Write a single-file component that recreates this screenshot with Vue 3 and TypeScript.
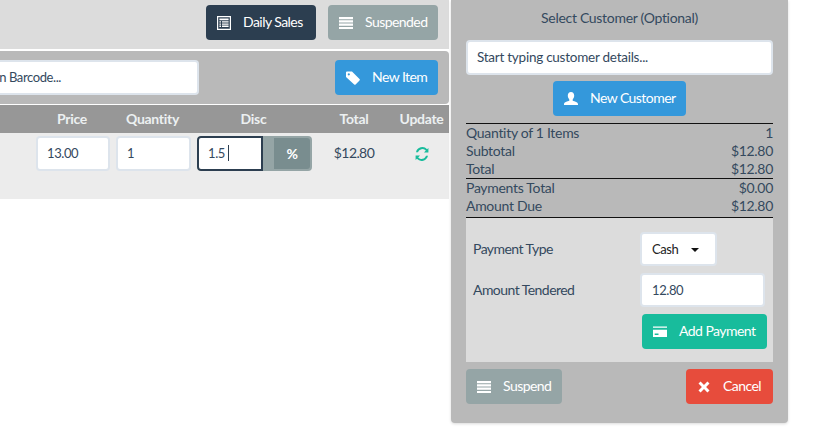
<script setup lang="ts">
const totalsTop = [
  { label: 'Quantity of 1 Items', value: '1' },
  { label: 'Subtotal', value: '$12.80' },
  { label: 'Total', value: '$12.80' },
]
const totalsBottom = [
  { label: 'Payments Total', value: '$0.00' },
  { label: 'Amount Due', value: '$12.80' },
]
</script>

<template>
  <div class="page">
    <div class="main">
      <div class="topbar">
        <button class="btn btn--dark top-btn">
          <svg class="ico" viewBox="0 0 14 14"><path fill="currentColor" fill-rule="evenodd" d="M0 0h14v14H0zM1.200 1.200v11.600h11.600V1.200zM2.400 2.400h9.200v1.800H2.400zM2.400 5.200h1.600v1.300H2.400zM5 5.200h6.600v1.300H5zM2.400 7.400h1.600v1.300H2.400zM5 7.400h6.600v1.300H5zM2.400 9.600h1.600v1.300H2.400zM5 9.600h6.600v1.300H5z" /></svg>
          <span>Daily Sales</span>
        </button>
        <button class="btn btn--gray top-btn">
          <svg class="ico" viewBox="0 0 14 14"><path fill="currentColor" d="M0 1h14v2.200H0zM0 4.300h14v2.200H0zM0 7.600h14v2.200H0zM0 10.900h14v2.200H0z" /></svg>
          <span>Suspended</span>
        </button>
      </div>
      <div class="searchbar">
        <div class="field search"><span class="search-text">Enter Item Name or Scan Barcode...</span></div>
        <button class="btn btn--blue new-item">
          <svg class="ico" viewBox="0 0 14 14"><path fill="currentColor" fill-rule="evenodd" d="M0 1.500A1 1 0 0 1 1 .5h5l7.500 7.600a1 1 0 0 1 0 1.400l-3.900 3.900a1 1 0 0 1-1.400 0L0 6zM2.800 2.200a1.100 1.100 0 1 0 .01 0z" /></svg>
          <span>New Item</span>
        </button>
      </div>
      <div class="grid grid--head">
        <span></span>
        <span>Price</span>
        <span>Quantity</span>
        <span>Disc</span>
        <span>Total</span>
        <span>Update</span>
      </div>
      <div class="grid grid--row">
        <span></span>
        <div class="field cell cell--price">13.00</div>
        <div class="field cell">1</div>
        <div class="disc">
          <div class="disc-input">1.5<i class="caret"></i></div>
          <div class="disc-addon"><b>%</b></div>
        </div>
        <span class="amount">$12.80</span>
        <svg class="refresh" viewBox="0 0 14 14"><path fill="currentColor" d="M13.400 1v4.400H9L10.800 3.600A4.600 4.600 0 0 0 3 5.200H1A6.500 6.500 0 0 1 12.100 2.200zM.6 13V8.600H5L3.200 10.400A4.600 4.600 0 0 0 11 8.800h2A6.500 6.500 0 0 1 1.900 11.800z" /></svg>
      </div>
    </div>

    <div class="side">
      <div class="side-title">Select Customer (Optional)</div>
      <div class="field customer">Start typing customer details...</div>
      <div class="center">
        <button class="btn btn--blue new-customer">
          <svg class="ico" viewBox="0 0 14 14"><path fill="currentColor" d="M7 0c2 0 3.200 1.500 3.200 3.600 0 1.600-.7 3-1.500 3.800v1.300c1.800.7 5.300 1.200 5.300 3.400V13H0v-.9c0-2.200 3.500-2.700 5.300-3.400V7.400C4.500 6.600 3.800 5.200 3.800 3.600 3.800 1.500 5 0 7 0z" /></svg>
          <span>New Customer</span>
        </button>
      </div>
      <div class="totals">
        <div v-for="row in totalsTop" :key="row.label" class="total-row">
          <span>{{ row.label }}</span><span>{{ row.value }}</span>
        </div>
      </div>
      <div class="totals totals--second">
        <div v-for="row in totalsBottom" :key="row.label" class="total-row">
          <span>{{ row.label }}</span><span>{{ row.value }}</span>
        </div>
      </div>
      <div class="payment">
        <div class="pay-line">
          <span class="pay-label">Payment Type</span>
          <div class="field select">Cash<i class="drop"></i></div>
        </div>
        <div class="pay-line pay-line--amount">
          <span class="pay-label">Amount Tendered</span>
          <div class="field tendered">12.80</div>
        </div>
        <div class="pay-action">
          <button class="btn btn--green add-payment">
            <svg class="ico" viewBox="0 0 14 14"><path fill="currentColor" fill-rule="evenodd" d="M0 1.500h14v10.500H0zM0 2.700v2h14v-2zM1.700 8.600v1.400h3.800V8.600z" /></svg>
            <span>Add Payment</span>
          </button>
        </div>
      </div>
      <div class="side-actions">
        <button class="btn btn--gray suspend">
          <svg class="ico" viewBox="0 0 14 14"><path fill="currentColor" d="M0 1h14v2.200H0zM0 4.300h14v2.200H0zM0 7.600h14v2.200H0zM0 10.900h14v2.200H0z" /></svg>
          <span>Suspend</span>
        </button>
        <button class="btn btn--red cancel">
          <svg class="ico" viewBox="0 0 14 14"><path fill="currentColor" d="M3.600 1.500 7 4.900l3.400-3.400 2.100 2.100L9.100 7l3.400 3.400-2.100 2.100L7 9.100l-3.400 3.400-2.100-2.100L4.900 7 1.500 3.600z" /></svg>
          <span>Cancel</span>
        </button>
      </div>
    </div>
  </div>
</template>

<style>
html,
body {
  margin: 0;
  background: #fff;
}
</style>

<style scoped>
.page {
  display: flex;
  width: 818px;
  height: 439px;
  overflow: hidden;
  font-family: Lato, 'Open Sans', sans-serif;
  font-size: 14px;
  letter-spacing: -0.3px;
  color: #34495e;
}

.main {
  width: 449px;
  flex-shrink: 0;
  overflow: hidden;
}

.btn {
  display: inline-flex;
  align-items: center;
  box-sizing: border-box;
  height: 35px;
  padding: 0 11px;
  border: 0;
  border-radius: 4px;
  color: #fff;
  font-family: inherit;
  font-size: 14px;
  letter-spacing: -0.55px;
  white-space: nowrap;
}

.btn span { margin-top: -2px; }

.btn--dark { background: #2c3e50; }
.btn--gray { background: #95a5a6; }
.btn--blue { background: #3498db; }
.btn--green { background: #18bc9c; }
.btn--red { background: #e74c3c; }

.ico {
  width: 14px;
  height: 14px;
  margin-right: 12px;
  flex-shrink: 0;
}

.topbar {
  display: flex;
  justify-content: flex-end;
  gap: 12px;
  box-sizing: border-box;
  height: 49px;
  padding: 5px 11px 0 0;
  background: #dcdcdc;
}

.top-btn { width: 110px; }

.searchbar {
  display: flex;
  align-items: center;
  justify-content: space-between;
  box-sizing: border-box;
  height: 53px;
  margin-top: 2px;
  padding-right: 11px;
  background: #b9b9b9;
  border-radius: 0 4px 4px 0;
}

.field {
  box-sizing: border-box;
  height: 35px;
  line-height: 31px;
  padding: 0 9px;
  background: #fff;
  border: 2px solid #dde4ec;
  border-radius: 4px;
  font-size: 13px;
  letter-spacing: -0.4px;
}

.customer {
  font-size: 13.5px;
  letter-spacing: -0.25px;
}

.search {
  display: flex;
  justify-content: flex-end;
  width: 199px;
  flex-shrink: 0;
  white-space: nowrap;
  padding-right: 136px;
  border-left: 0;
  border-radius: 0 4px 4px 0;
}

.search-text { flex-shrink: 0; }

.new-item { width: 103px; }

.grid {
  display: grid;
}

.grid--head {
  grid-template-columns: 32px 80px 81px 121px 80px 55px;
  box-sizing: border-box;
  height: 28px;
  margin-top: 1px;
  padding-bottom: 2px;
  align-items: center;
  background: #979797;
  color: #ecf0f1;
  font-weight: 700;
  text-align: center;
}

.grid--row {
  grid-template-columns: 36px 80px 81px 115px 84px 1fr;
  box-sizing: border-box;
  height: 66px;
  padding-top: 3px;
  align-items: start;
  background: #ececec;
}

.cell { width: 75px; }
.cell--price { width: 74px; }

.disc {
  display: flex;
  box-sizing: border-box;
  height: 35px;
  background: #95a5a6;
  border-radius: 4px;
  overflow: hidden;
}

.disc-input {
  box-sizing: border-box;
  width: 66px;
  height: 35px;
  line-height: 31px;
  padding-left: 9px;
  background: #fff;
  border: 2px solid #2c3e50;
  border-radius: 4px 0 0 4px;
  font-size: 13px;
  letter-spacing: -0.4px;
}

.caret {
  display: inline-block;
  width: 1px;
  height: 16px;
  margin-left: 3px;
  vertical-align: -3px;
  background: #2c3e50;
}

.disc-addon {
  display: flex;
  align-items: center;
  justify-content: center;
  box-sizing: border-box;
  width: 36px;
  height: 31px;
  margin: 2px 2px 2px 11px;
  background: #798d8f;
  color: #fff;
  border-radius: 0 3px 3px 0;
}

.amount {
  line-height: 33px;
  text-align: center;
  letter-spacing: -0.6px;
}

.refresh {
  width: 14px;
  height: 14px;
  margin: 11px 0 0 19px;
  color: #18bc9c;
}

.side {
  box-sizing: border-box;
  width: 337px;
  height: 423px;
  margin-left: 2px;
  padding: 0 15px;
  background: #b9b9b9;
  border-radius: 0 0 4px 4px;
  box-shadow: 0 1px 3px rgba(0, 0, 0, 0.15);
}

.side-title {
  height: 40px;
  line-height: 36px;
  text-align: center;
}

.center {
  display: flex;
  justify-content: center;
  margin-top: 6px;
}

.new-customer { width: 133px; }

.totals {
  margin-top: 7px;
  border-top: 1px solid #111;
}

.totals--second { margin-top: 0; }

.total-row {
  display: flex;
  justify-content: space-between;
  height: 18px;
  line-height: 18px;
}

.payment {
  box-sizing: border-box;
  height: 145px;
  margin-top: 2px;
  padding: 14px 6px 0 7px;
  background: #dcdcdc;
  border-top: 1px solid #111;
}

.pay-line {
  display: flex;
  align-items: center;
}

.pay-line--amount { margin-top: 7px; }

.pay-label {
  width: 167px;
  margin-top: -2px;
  letter-spacing: -0.55px;
}

.select,
.tendered {
  height: 34px;
  line-height: 30px;
  padding-left: 10px;
}

.select {
  width: 77px;
  color: #222;
}

.drop {
  display: inline-block;
  margin-left: 13px;
  vertical-align: 2px;
  border-top: 4px solid #111;
  border-left: 4px solid transparent;
  border-right: 4px solid transparent;
}

.tendered { width: 125px; }

.pay-action { margin: 7px 0 0 169px; }

.add-payment { width: 125px; }

.side-actions {
  display: flex;
  justify-content: space-between;
  margin-top: 7px;
}

.suspend { width: 96px; }

.cancel { width: 87px; }
</style>
